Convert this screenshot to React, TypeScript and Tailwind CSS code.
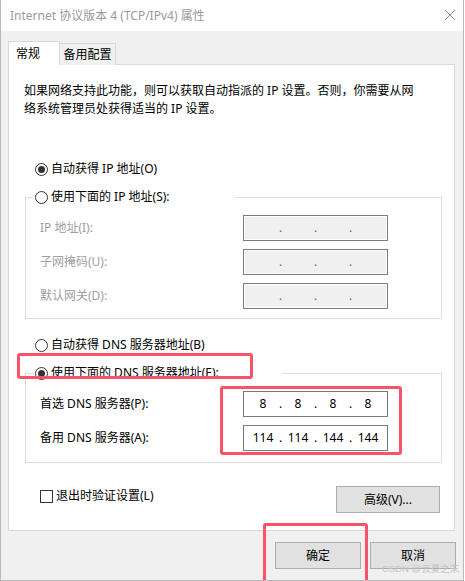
import React from 'react'

const font = "font-['Noto_Sans','Noto_Sans_CJK_SC',sans-serif]"

function Radio({ checked, children }: { checked?: boolean; children: React.ReactNode }) {
  return (
    <div className="flex items-center gap-[3px] h-[18px] text-[12px] text-black">
      <span className="w-[13px] h-[13px] rounded-full border border-[#333] bg-white flex items-center justify-center shrink-0">
        {checked && <span className="w-[7px] h-[7px] rounded-full bg-[#333]" />}
      </span>
      <span className="whitespace-nowrap">{children}</span>
    </div>
  )
}

function IpBox({ values, disabled }: { values?: string[]; disabled?: boolean }) {
  const segs = values ?? ['', '', '', '']
  return (
    <div
      className={`w-[145px] h-[26px] border border-[#7a7a7a] flex items-center pl-[5px] text-[12px] ${
        disabled ? 'bg-[#f0f0f0] shadow-[inset_0_0_0_1px_#fff] text-[#6d6d6d]' : 'bg-white text-black'
      }`}
    >
      {segs.map((v, i) => (
        <React.Fragment key={i}>
          <span className="w-[28px] text-center">{v}</span>
          {i < 3 && <span className="w-[7px] text-center">.</span>}
        </React.Fragment>
      ))}
    </div>
  )
}

function Row({ label, disabled, values }: { label: string; disabled?: boolean; values?: string[] }) {
  return (
    <div className="flex items-center h-[26px]">
      <span className={`w-[203px] text-[12px] ${disabled ? 'text-[#a0a0a0]' : 'text-black'}`}>{label}</span>
      <IpBox disabled={disabled} values={values} />
    </div>
  )
}

function Btn({ children, w }: { children: React.ReactNode; w: string }) {
  return (
    <button className={`${w} h-[27px] bg-[#e1e1e1] border border-[#adadad] text-[12px] text-black`}>
      {children}
    </button>
  )
}

export default function App() {
  return (
    <div className={`${font} relative w-[464px] h-[581px] overflow-hidden bg-[#f0f0f0] border-l border-r border-b border-[#b9b9b9]`}>
      {/* title bar */}
      <div className="h-[31px] bg-white flex items-center justify-between pl-[9px] pr-[7px]">
        <span className="text-[12px] text-[#9a9a9a]">Internet 协议版本 4 (TCP/IPv4) 属性</span>
        <svg width="12" height="12" viewBox="0 0 12 12" className="mb-[2px]">
          <path d="M1 1 L11 11 M11 1 L1 11" stroke="#8a8a8a" strokeWidth="1" />
        </svg>
      </div>

      <div className="pl-[7px] pt-[10px]">
        {/* tabs */}
        <div className="flex items-end -mb-px relative z-10 text-[12px] text-black">
          <div className="w-[52px] h-[24px] bg-white border border-b-0 border-[#d9d9d9] flex items-center pl-[7px]">常规</div>
          <div className="w-[56px] h-[22px] bg-[#f0f0f0] border-t border-r border-[#d9d9d9] flex items-center justify-center">
            备用配置
          </div>
        </div>

        {/* panel */}
        <div className="w-[447px] h-[467px] bg-white border border-[#d9d9d9] pt-[17px]">
          <p className="pl-[15px] text-[12px] leading-[18px] text-black">
            如果网络支持此功能，则可以获取自动指派的 IP 设置。否则，你需要从网
            <br />
            络系统管理员处获得适当的 IP 设置。
          </p>

          <div className="ml-[26px] mt-[42px]">
            <Radio checked>自动获得 IP 地址(O)</Radio>
          </div>

          <div className="relative ml-[16px] mt-[19px] w-[417px] border border-[#dcdcdc] pt-[17px] pb-[9px] pl-[14px] flex flex-col gap-[8px]">
            <div className="absolute left-[7px] -top-[10px] w-[202px] bg-white pl-[2px]">
              <Radio>使用下面的 IP 地址(S):</Radio>
            </div>
            <Row label="IP 地址(I):" disabled />
            <Row label="子网掩码(U):" disabled />
            <Row label="默认网关(D):" disabled />
          </div>

          <div className="ml-[26px] mt-[17px]">
            <Radio>自动获得 DNS 服务器地址(B)</Radio>
          </div>

          <div className="relative ml-[16px] mt-[19px] w-[417px] border border-[#dcdcdc] pt-[17px] pb-[11px] pl-[14px] flex flex-col gap-[8px]">
            <div className="absolute left-[7px] -top-[10px] w-[249px] bg-white pl-[2px]">
              <Radio checked>使用下面的 DNS 服务器地址(E):</Radio>
            </div>
            <Row label="首选 DNS 服务器(P):" values={['8', '8', '8', '8']} />
            <Row label="备用 DNS 服务器(A):" values={['114', '114', '144', '144']} />
          </div>

          <div className="flex items-start justify-between mt-[23px] pl-[31px] pr-[14px]">
            <div className="flex items-center gap-[3px] mt-[1px] text-[12px] text-black">
              <span className="w-[13px] h-[13px] border border-[#333] bg-white" />
              <span>退出时验证设置(L)</span>
            </div>
            <Btn w="w-[104px]">高级(V)...</Btn>
          </div>
        </div>

        {/* dialog buttons */}
        <div className="flex justify-end gap-[9px] mt-[11px] pr-[7px]">
          <Btn w="w-[86px]">确定</Btn>
          <Btn w="w-[86px]">取消</Btn>
        </div>
      </div>

      {/* annotations */}
      <div className="absolute left-[16px] top-[353px] w-[236px] h-[26px] border-[3px] border-[#f9536a] rounded-[3px]" />
      <div className="absolute left-[219px] top-[386px] w-[182px] h-[69px] border-[3px] border-[#f9536a] rounded-[3px]" />
      <div className="absolute left-[262px] top-[523px] w-[105px] h-[70px] border-[3px] border-[#f9536a] rounded-[3px]" />
      <div className="absolute left-[381px] top-[562px] text-[9.5px] leading-[14px] text-[#c4c4c4] whitespace-nowrap font-['Liberation_Sans','Noto_Sans_CJK_SC',sans-serif]">
        CSDN @云夏之末
      </div>
    </div>
  )
}
